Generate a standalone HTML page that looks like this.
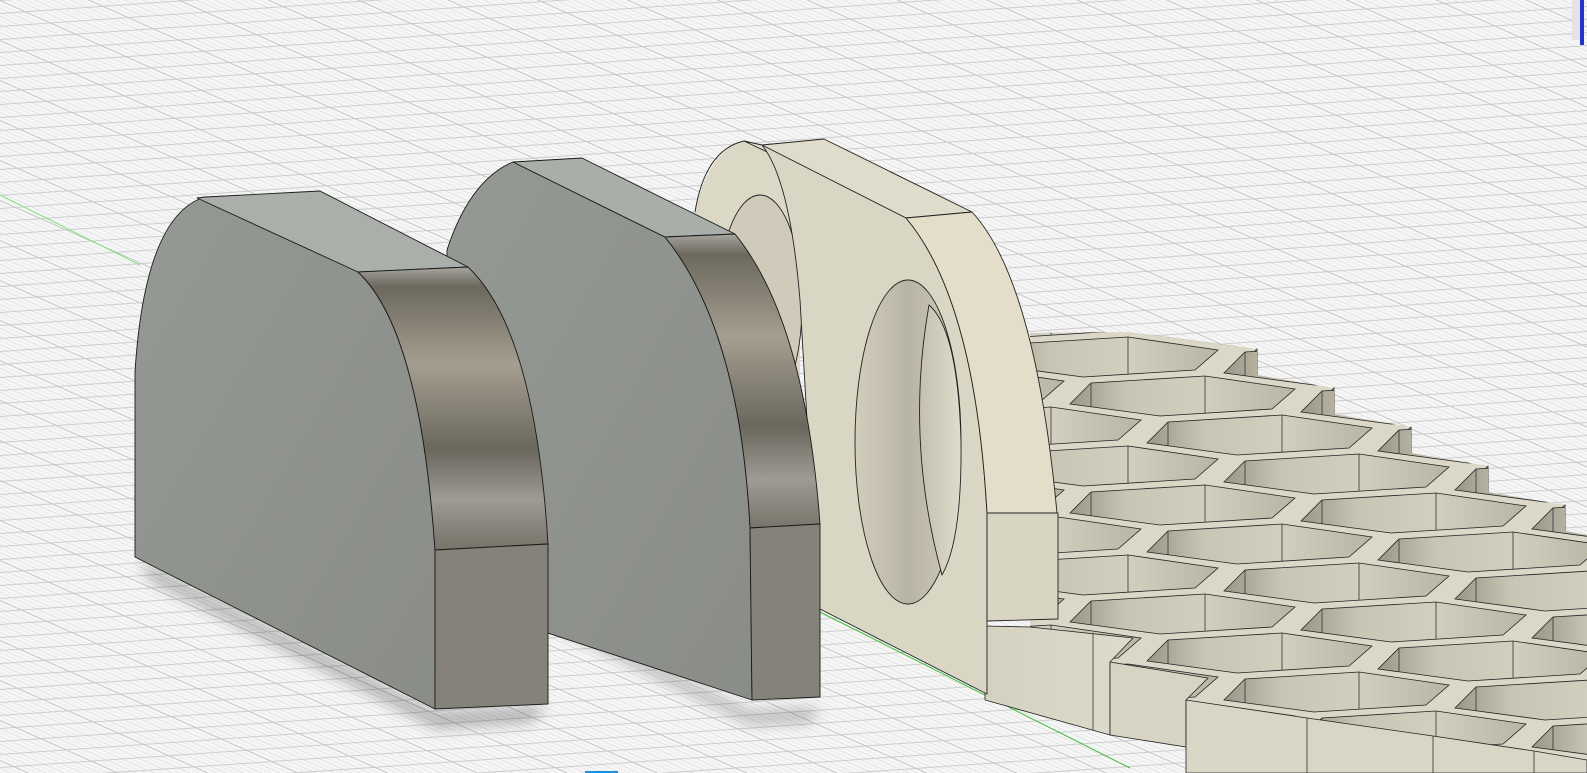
<!DOCTYPE html>
<html><head><meta charset="utf-8"><style>
html,body{margin:0;padding:0;background:#f6f6f6;overflow:hidden}
svg{display:block}
</style></head><body>
<svg id="s" width="1587" height="773" viewBox="0 0 1587 773" xmlns="http://www.w3.org/2000/svg">
<defs>
<pattern id="gA" width="40" height="8" patternUnits="userSpaceOnUse" patternTransform="skewY(24)">
<line x1="0" y1="0.5" x2="40" y2="0.5" stroke="#e2e2e2" stroke-width="1"/>
<line x1="0" y1="4.5" x2="40" y2="4.5" stroke="#ebebeb" stroke-width="1"/>
</pattern>
<pattern id="gA2" width="40" height="40" patternUnits="userSpaceOnUse" patternTransform="skewY(24)">
<line x1="0" y1="0.5" x2="40" y2="0.5" stroke="#c4c4c4" stroke-width="1"/>
</pattern>
<pattern id="gB" width="40" height="13" patternUnits="userSpaceOnUse" patternTransform="skewY(-4)">
<line x1="0" y1="0.5" x2="40" y2="0.5" stroke="#cdcdcd" stroke-width="1"/>
</pattern>
<filter id="bl" x="-20%" y="-50%" width="140%" height="200%"><feGaussianBlur stdDeviation="7"/></filter>
<linearGradient id="band" x1="0" y1="267" x2="0" y2="544" gradientUnits="userSpaceOnUse">
<stop offset="0" stop-color="#a5a69e"/><stop offset="0.07" stop-color="#6c685d"/>
<stop offset="0.35" stop-color="#a59e90"/><stop offset="0.66" stop-color="#6a675d"/>
<stop offset="0.84" stop-color="#9e9b94"/><stop offset="1" stop-color="#7a766c"/>
</linearGradient>
<linearGradient id="band2" x1="0" y1="234" x2="0" y2="526" gradientUnits="userSpaceOnUse">
<stop offset="0" stop-color="#a5a69e"/><stop offset="0.07" stop-color="#6c685d"/>
<stop offset="0.35" stop-color="#a59e90"/><stop offset="0.66" stop-color="#6a675d"/>
<stop offset="0.84" stop-color="#9e9b94"/><stop offset="1" stop-color="#7a766c"/>
</linearGradient>
<linearGradient id="face" x1="0" y1="0" x2="1" y2="1">
<stop offset="0" stop-color="#959993"/><stop offset="1" stop-color="#8a8d87"/>
</linearGradient>
<linearGradient id="pk" x1="0" y1="0" x2="1" y2="0">
<stop offset="0" stop-color="#9a9788"/><stop offset="0.25" stop-color="#c9c5b4"/>
<stop offset="0.6" stop-color="#d3cfbe"/><stop offset="1" stop-color="#b9b5a4"/>
</linearGradient>
<linearGradient id="hole" x1="0" y1="0" x2="1" y2="0">
<stop offset="0" stop-color="#d2cdbb"/><stop offset="0.5" stop-color="#b9b5a5"/><stop offset="1" stop-color="#d0cbb9"/>
</linearGradient>
<linearGradient id="holeIn" x1="0" y1="0" x2="1" y2="0">
<stop offset="0" stop-color="#c4c0b0"/><stop offset="1" stop-color="#e0dccb"/>
</linearGradient>
<linearGradient id="ff" x1="0" y1="0" x2="1" y2="0">
<stop offset="0" stop-color="#d4d1c0"/><stop offset="1" stop-color="#dedbcb"/>
</linearGradient>
<clipPath id="slabClip"><polygon id="slabPolyC" points=""/></clipPath>
</defs>
<rect width="1587" height="773" fill="#f6f6f6"/>
<rect width="1587" height="773" fill="url(#gA)"/>
<rect width="1587" height="773" fill="url(#gB)"/>
<rect width="1587" height="773" fill="url(#gA2)"/>
<line x1="0" y1="195" x2="140" y2="265" stroke="#7fe07f" stroke-width="1"/>
<line x1="820" y1="612" x2="1130" y2="768" stroke="#39c039" stroke-width="1"/>

<polygon points="140,560 436,712 548,706 530,722 436,728 150,580" fill="#000" opacity="0.28" filter="url(#bl)"/>
<polygon points="548,610 750,712 820,708 810,722 750,724 560,630" fill="#000" opacity="0.25" filter="url(#bl)"/>

<g id="hc">
<polygon id="slabPoly" points="" fill="#dbd8c8"/>
<g id="walls"></g>
<g clip-path="url(#slabClip)" id="pockets"></g>
<polygon points="985,626 1030,627 1133,638 1110,662 1110,735 985,700" fill="url(#ff)" stroke="#222" stroke-width="0.8"/>
<polygon points="1110,662 1208,678 1186,700 1186,747 1110,735" fill="#d7d4c3" stroke="#222" stroke-width="0.8"/>
<polygon points="1186,700 1307,718 1433,736 1534,751 1587,760 1587,773 1186,773" fill="#d9d6c5" stroke="#222" stroke-width="0.8"/>
<line x1="1093" y1="633" x2="1093" y2="730" stroke="#333" stroke-width="0.8"/>
<line x1="1307" y1="718" x2="1307" y2="773" stroke="#333" stroke-width="0.8"/>
<line x1="1433" y1="736" x2="1433" y2="773" stroke="#333" stroke-width="0.8"/>
<line x1="1534" y1="751" x2="1534" y2="773" stroke="#333" stroke-width="0.8"/>
</g>

<g stroke="#222" stroke-width="0.9" stroke-linejoin="round">
<path d="M695,210 Q710,150 744,141 L762,145 L800,200 L800,600 L700,560 Z" fill="#dcd8c6" stroke="none"/>
<path d="M695,212 Q705,150 744,141" fill="none"/>
<ellipse cx="760" cy="305" rx="42" ry="110" fill="#cfcab9"/>
<path d="M744,141 L762,145 L824,139 L972,212 L906,218 Z" fill="#e0dccb"/>
<path d="M762,145 L906,218 Q975,300 987,513 L987,694 L818,608 L800,300 Q790,180 762,145 Z" fill="#dad6c4"/>
<path d="M906,218 L972,212 Q1035,280 1057,513 L987,513 Q975,300 906,218 Z" fill="#e3ddc9"/>
<path d="M987,513 L1058,513 L1058,619 L987,621 Z" fill="#d9d5c3"/>
<ellipse cx="908" cy="442" rx="53" ry="162" fill="url(#hole)"/>
<path d="M929,305 Q905,440 942,575 Q962,540 961,442 Q958,330 929,305 Z" fill="url(#holeIn)"/>
</g>

<g stroke="#1a1a1a" stroke-width="0.9" stroke-linejoin="round">
<path d="M513,162 Q470,180 447,250 L447,600 L752,700 L750,528 Q740,330 665,237 Z" fill="url(#face)"/>
<path d="M513,162 L582,158 L735,234 L665,237 Z" fill="#a9aea8"/>
<path d="M665,237 L735,234 Q805,320 820,524 L750,528 Q740,330 665,237 Z" fill="url(#band2)"/>
<path d="M750,528 L820,524 L820,697 L752,700 Z" fill="#858279"/>
</g>

<g stroke="#1a1a1a" stroke-width="0.9" stroke-linejoin="round">
<path d="M205,197 Q145,215 135,372 L135,557 L435,709 L435,550 Q420,330 358,272 Z" fill="url(#face)"/>
<path d="M197,198 L205,197 L320,191 L468,267 L358,272 Z" fill="#aaafa9"/>
<path d="M358,272 L468,267 Q535,330 548,544 L435,550 Q420,330 358,272 Z" fill="url(#band)"/>
<path d="M435,550 L548,544 L548,704 L435,709 Z" fill="#858279"/>
</g>

<rect x="585" y="771" width="33" height="2" fill="#1a8fe0"/>
<rect x="1580" y="0" width="4" height="45" fill="#2233cc"/>
<rect x="1572" y="0" width="8" height="40" fill="#e4e4e8"/>
</svg>
<script>
(function(){
var NS="http://www.w3.org/2000/svg";
var pts=[[1030,333],[1129,332],[1257,349]];
var walls=document.getElementById('walls');
for(var k=0;k<5;k++){
 var ax=1257+77*k, ay=349+39*k;
 pts.push([ax,ay+26]);
 pts.push([ax+77,ay+39]);
 var w=document.createElementNS(NS,'polygon');
 w.setAttribute('points',ax+','+ay+' '+ax+','+(ay+26)+' '+(ax-25)+','+(ay+23));
 w.setAttribute('fill','#bfbba9');w.setAttribute('stroke','#222');w.setAttribute('stroke-width','0.8');
 walls.appendChild(w);
}
pts.push([1587,560],[1587,760],[1186,700],[1208,678],[1110,662],[1133,638],[1030,627]);
var s=pts.map(function(p){return p.join(',')}).join(' ');
document.getElementById('slabPoly').setAttribute('points',s);
document.getElementById('slabPolyC').setAttribute('points',s);
var g=document.getElementById('pockets');
var rel=[[0,0],[21,-21],[135,-28],[225,-15],[202,5],[90,12]];
for(var i=-8;i<10;i++){for(var j=-4;j<5;j++){
 var Lx=1224+77*i+231*j, Ly=482+39*i+8*j;
 if(Lx+225<1000||Lx>1600||Ly<320||Ly>790) continue;
 var p=rel.map(function(r){return (Lx+r[0])+','+(Ly+r[1])}).join(' ');
 var e=document.createElementNS(NS,'polygon');
 e.setAttribute('points',p);e.setAttribute('fill','url(#pk)');
 e.setAttribute('stroke','#222');e.setAttribute('stroke-width','0.8');
 g.appendChild(e);
 var l1=document.createElementNS(NS,'line');
 l1.setAttribute('x1',Lx+21);l1.setAttribute('y1',Ly-21);l1.setAttribute('x2',Lx+21);l1.setAttribute('y2',Ly+3);
 l1.setAttribute('stroke','#333');l1.setAttribute('stroke-width','0.8');g.appendChild(l1);
 var l2=document.createElementNS(NS,'line');
 l2.setAttribute('x1',Lx+135);l2.setAttribute('y1',Ly-28);l2.setAttribute('x2',Lx+135);l2.setAttribute('y2',Ly+9);
 l2.setAttribute('stroke','#333');l2.setAttribute('stroke-width','0.8');g.appendChild(l2);
}}
})();
</script>
</body></html>
